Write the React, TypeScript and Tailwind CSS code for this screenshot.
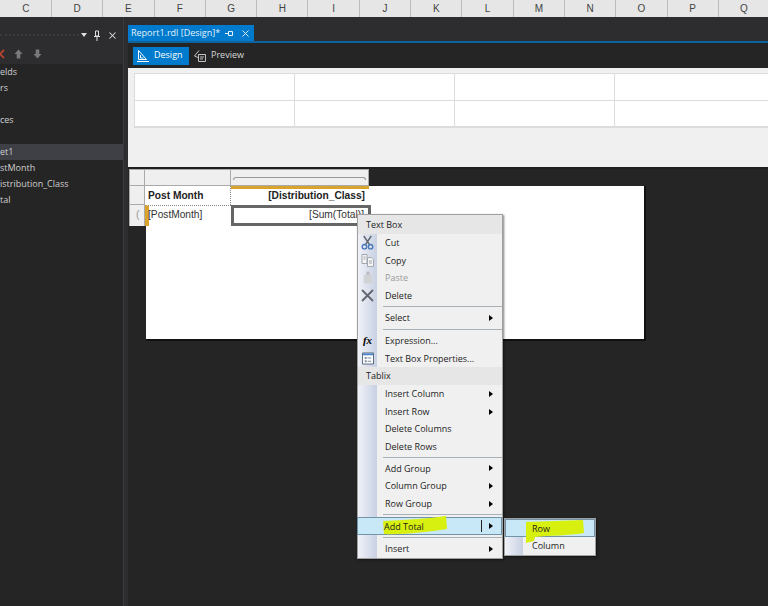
import { X } from 'lucide-react';

const columns = ['C', 'D', 'E', 'F', 'G', 'H', 'I', 'J', 'K', 'L', 'M', 'N', 'O', 'P', 'Q'];
const treeRows = ['elds', 'rs', '', 'ces', '', 'et1', 'stMonth', 'istribution_Class', 'tal'];

const ui = "font-['Open_Sans',sans-serif]";

const ScissorsIcon = () => (
  <svg width="13" height="15" viewBox="0 0 14 16" fill="none">
    <path d="M3 1l6 9M11 1L5 10" stroke="#5f6870" strokeWidth="1.6" />
    <circle cx="3.700" cy="12.500" r="2.400" stroke="#4a78b8" strokeWidth="1.500" />
    <circle cx="10.300" cy="12.500" r="2.400" stroke="#4a78b8" strokeWidth="1.500" />
  </svg>
);

const CopyIcon = () => (
  <svg width="14" height="14" viewBox="0 0 14 14" fill="none" stroke="#a0a8b0">
    <path d="M1 1.500h5v9H1z" fill="#f4f4f4" />
    <path d="M6.500 4.500h4l2 2v7h-6z" fill="#f4f4f4" />
    <path d="M2.500 4h2M2.500 6h2M8 8h3M8 10h3" />
  </svg>
);

const PasteIcon = () => (
  <svg width="10" height="13" viewBox="0 0 12 14" fill="#d0d2d4">
    <path d="M1 4h10v10H1z" />
    <path d="M4 0h4v4H4z" fill="#bdbfc2" />
  </svg>
);

const DeleteIcon = () => (
  <svg width="13" height="13" viewBox="0 0 13 13" fill="none" stroke="#62676d" strokeWidth="1.800">
    <path d="M1 1l11 11M12 1L1 12" />
  </svg>
);

const PropertiesIcon = () => (
  <svg width="12" height="13" viewBox="0 0 13 13" fill="#ffffff">
    <path d="M.5.500h12v12H.5z" stroke="#4c5f78" />
    <path d="M1 1h11v2H1z" fill="#4b83c4" />
    <path d="M3 5h2v2H3zM3 8.500h2v2H3z" fill="#7a8a9a" />
    <path d="M6 5.500h4v1H6zM6 9h4v1H6z" fill="#7a8a9a" />
  </svg>
);

const Arrow = () => <span className="block h-0 w-0 border-y-[3px] border-l-[4px] border-y-transparent border-l-black" />;

type MenuRowProps = {
  label: string;
  icon?: React.ReactNode;
  arrow?: boolean;
  disabled?: boolean;
};

const MenuRow = ({ label, icon, arrow, disabled }: MenuRowProps) => (
  <div className="flex h-[17.6px] items-center">
    <div className="flex w-[19px] shrink-0 items-center justify-center self-stretch">{icon}</div>
    <span className={`ml-[8px] flex-1 text-[9px] ${disabled ? 'text-[#9a9a9a]' : 'text-[#1c1c1c]'}`}>{label}</span>
    {arrow && (
      <span className="mr-[9px]">
        <Arrow />
      </span>
    )}
  </div>
);

const MenuHeader = ({ label, tall }: { label: string; tall?: boolean }) => (
  <div className={`flex items-center bg-[#e6e6e6] pl-[8px] text-[9px] text-[#1c1c1c] ${tall ? 'h-[19px]' : 'h-[18px]'}`}>{label}</div>
);

const Separator = ({ short }: { short?: boolean }) => (
  <div className={`flex items-center pl-[25px] ${short ? 'h-[4px]' : 'h-[5px]'}`}>
    <div className="h-px w-full bg-[#a9b0b6]" />
  </div>
);

const ContextMenu = () => (
  <div className={`${ui} absolute left-[229px] top-[45px] w-[146px] border border-[#a0a0a0] bg-[#f0f0f0] shadow-[1px_1px_2px_rgba(0,0,0,0.5)]`}>
    <div className="absolute bottom-0 left-0 top-0 w-[19px] bg-gradient-to-r from-[#f0f2f8] to-[#c8d0e2]" />
    <div className="relative">
      <MenuHeader label="Text Box" tall />
      <MenuRow label="Cut" icon={<ScissorsIcon />} />
      <MenuRow label="Copy" icon={<CopyIcon />} />
      <MenuRow label="Paste" icon={<PasteIcon />} disabled />
      <MenuRow label="Delete" icon={<DeleteIcon />} />
      <Separator />
      <MenuRow label="Select" arrow />
      <Separator />
      <MenuRow
        label="Expression..."
        icon={<span className="font-['Liberation_Serif',serif] text-[11px] font-bold italic leading-none text-black">fx</span>}
      />
      <MenuRow label="Text Box Properties..." icon={<PropertiesIcon />} />
      <MenuHeader label="Tablix" />
      <MenuRow label="Insert Column" arrow />
      <MenuRow label="Insert Row" arrow />
      <MenuRow label="Delete Columns" />
      <MenuRow label="Delete Rows" />
      <Separator short />
      <MenuRow label="Add Group" arrow />
      <MenuRow label="Column Group" arrow />
      <MenuRow label="Row Group" arrow />
      <Separator />
      <div className="relative -ml-px flex h-[18px] items-center border border-[#6f93a8] bg-[#c9e8f7]">
        <svg className="absolute left-[25px] top-[-2px]" width="66" height="20" viewBox="0 0 66 20" fill="#d8f010">
          <path d="M0 5 C20 4 42 3 63 0 L64 13 C44 16 20 19 1 18 Z" />
        </svg>
        <span className="relative ml-[26px] flex-1 text-[9px] text-[#1c1c1c]">Add Total</span>
        <span className="mr-[7px] h-[12px] w-px bg-[#222222]" />
        <span className="mr-[8px]">
          <Arrow />
        </span>
      </div>
      <Separator />
      <MenuRow label="Insert" arrow />
    </div>
  </div>
);

const SubMenu = () => (
  <div className={`${ui} absolute left-[376px] top-[349px] w-[92px] border border-[#a0a0a0] bg-[#f0f0f0] shadow-[1px_1px_2px_rgba(0,0,0,0.5)]`}>
    <div className="absolute bottom-0 left-0 top-0 w-[18px] bg-gradient-to-r from-[#f0f2f8] to-[#c8d0e2]" />
    <div className="relative">
      <div className="relative flex h-[18px] items-center border border-[#6f93a8] bg-[#c9e8f7] pt-px">
        <svg className="absolute left-[19px] top-0" width="60" height="24" viewBox="0 0 60 24" fill="#d8f010">
          <path d="M1 2 C20 1 40 1 58 0 L59 13 C44 16 24 15 10 17 L9 21 L1 23 Z" />
        </svg>
        <span className="relative ml-[26px] text-[9px] text-[#1c1c1c]">Row</span>
      </div>
      <div className="flex h-[18px] items-center pl-[27px] text-[9px] text-[#1c1c1c]">Column</div>
    </div>
  </div>
);

const Tablix = () => (
  <div className="absolute left-px top-0 w-[240px] font-['Liberation_Sans',sans-serif] text-[10.2px] text-[#222222]">
    <div className="flex h-[17px]">
      <div className="w-[16px] border border-[#aaaaaa] bg-[#efefef]" />
      <div className="w-[86px] border-y border-r border-[#aaaaaa] bg-[#efefef]" />
      <div className="flex-1 border-y border-r border-[#aaaaaa] bg-[#efefef] px-[2px] pt-[7px]">
        <div className="h-[3px] rounded-t-[3px] border-x border-t border-[#999999]" />
      </div>
    </div>
    <div className="flex h-[19px]">
      <div className="w-[16px] border-x border-b border-[#aaaaaa] bg-[#efefef]" />
      <div className="flex w-[86px] items-center border-r border-dotted border-[#888888] bg-white pl-[3px] font-bold">Post Month</div>
      <div className="flex flex-1 items-center justify-end border-t-[3px] border-[#d9a42e] bg-white pb-[2px] pr-[4px] font-bold">[Distribution_Class]</div>
    </div>
    <div className="flex h-[21px]">
      <div className="w-[16px] border-x border-[#aaaaaa] bg-[#efefef] pl-[6px] leading-[19px] text-[#999999]">(</div>
      <div className="flex w-[86px] items-center border-l-[4px] border-t border-l-[#d9a42e] border-t-[#888888] pb-[2px] [border-top-style:dotted] bg-white text-[#333333]">
        <span className="-ml-px">[PostMonth]</span>
      </div>
      <div className="-mr-[2px] flex flex-1 items-center justify-end border-[3px] border-[#666666] bg-white pb-px pr-[2px] text-[#333333]">
        <span className="mr-[2px]">[Sum(Total)]</span>
      </div>
    </div>
  </div>
);

const App = () => (
  <div className={`${ui} flex h-[606px] w-[768px] flex-col overflow-hidden bg-[#2d2d30]`}>
    <div className="flex h-[17px] shrink-0 bg-[#e6e6e6] pl-[0.7px]">
      {columns.map((col) => (
        <div key={col} className="flex w-[51.3px] shrink-0 items-center justify-center border-r border-[#bcbcbc] font-['Liberation_Sans',sans-serif] text-[10px] text-[#444444]">
          {col}
        </div>
      ))}
    </div>

    <div className="flex min-h-0 flex-1">
      <div className="flex w-[123px] shrink-0 flex-col pt-[10px]">
        <div className="flex h-[16px] items-center pr-[5px]">
          <div className="h-0 flex-1 border-t-2 border-dotted border-[#3b3b3e]" />
          <span className="ml-[2px] block h-0 w-0 border-x-[3.5px] border-t-[4px] border-x-transparent border-t-[#e0e0e0]" />
          <svg className="ml-[6px]" width="8" height="11" viewBox="0 0 8 11" fill="none" stroke="#e0e0e0">
            <path d="M2.500 1h3v5h-3zM1 6.500h6M4 7v4" />
          </svg>
          <X className="ml-[6px] text-[#e0e0e0]" size={11} strokeWidth={2.2} />
        </div>
        <div className="flex h-[21px] items-center">
          <svg width="5" height="10" viewBox="0 0 5 10" fill="none" stroke="#b5452f" strokeWidth="1.800">
            <path d="M-4 1l8 8M4 1l-8 8" />
          </svg>
          <svg className="ml-[9px]" width="9" height="10" viewBox="0 0 10 10" fill="#77797c">
            <path d="M5 0l4.500 5H7v5H3V5H.5z" />
          </svg>
          <svg className="ml-[10px]" width="9" height="10" viewBox="0 0 10 10" fill="#77797c">
            <path d="M5 10l4.500-5H7V0H3v5H.5z" />
          </svg>
        </div>
        <div className="flex-1 bg-[#252526] text-[9px] text-[#cfcfcf]">
          {treeRows.map((row, i) => (
            <div key={i} className={`flex h-[16px] items-center ${row === 'et1' ? 'bg-[#3f3f46]' : ''}`}>
              {row}
            </div>
          ))}
        </div>
      </div>

      <div className="w-[5px] shrink-0 border-l border-[#3a3a3d] bg-[#2d2d30]" />

      <div className="flex min-w-0 flex-1 flex-col">
        <div className="flex h-[26px] shrink-0 items-end border-b-2 border-[#0e639c]">
          <div className="flex h-[16px] w-[126px] items-center bg-[#007acc] pl-[3px] text-[9px] text-[#e8f2fa]">
            <span className="flex-1 whitespace-nowrap">Report1.rdl [Design]*</span>
            <svg className="mr-[6px]" width="9" height="7" viewBox="0 0 9 7" fill="none" stroke="#e8f2fa">
              <path d="M0 3.500h3M3.500 1.500h4v4h-4z" />
            </svg>
            <X className="mr-[3px]" size={11} strokeWidth={2} />
          </div>
        </div>

        <div className="flex h-[25px] shrink-0 items-center bg-[#252526] pl-[5px] text-[9px] text-[#d8d8d8]">
          <div className="flex h-[18px] w-[56px] items-center gap-[5px] bg-[#007acc] pb-[2px] pl-[4px] text-white">
            <svg className="mt-[2px]" width="12" height="12" viewBox="0 0 12 12" fill="none" stroke="#ffffff">
              <path d="M1.500 .500v9l8 0zM3.500 5v3h3M0 11.500h12" />
            </svg>
            Design
          </div>
          <svg className="ml-[5px]" width="12" height="12" viewBox="0 0 12 12" fill="none" stroke="#c4c4c4">
            <path d="M.500 6L5 .500M.500 6L5 8M4.500 4.500h7v7h-7zM6 7h4M6 9h3" />
          </svg>
          <span className="mb-[2px] ml-[5px]">Preview</span>
        </div>

        <div className="h-[99px] shrink-0 bg-[#f0f0f0] pl-[6px] pt-[5px]">
          <div className="grid h-[55px] w-[700px] grid-cols-[160px_160px_160px_220px] grid-rows-2 border border-[#dcdcdc]">
            {Array.from({ length: 8 }, (_, i) => (
              <div key={i} className="border-b border-r border-[#dcdcdc] bg-white" />
            ))}
          </div>
        </div>

        <div className="relative flex-1 border-t-2 border-[#1f1f20] bg-[#252526] pl-[18px] pt-[17px]">
          <div className="h-[155px] w-[500px] border-b-2 border-r-2 border-[#111111] bg-white" />
          <Tablix />
          <ContextMenu />
          <SubMenu />
        </div>
      </div>
    </div>
  </div>
);

export default App;
